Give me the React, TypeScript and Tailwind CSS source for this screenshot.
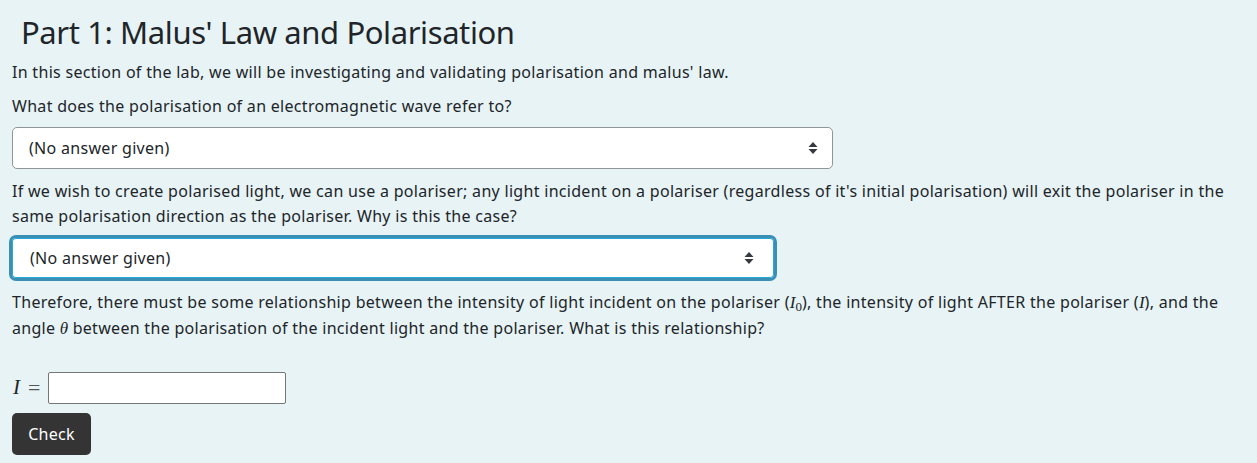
import { useState } from "react"

function Arrows() {
  return (
    <svg width="10" height="14" viewBox="0 0 10 14" className="shrink-0">
      <path d="M5 1 L9.5 6 H0.5 Z" fill="#343a40" />
      <path d="M5 13 L9.5 8 H0.5 Z" fill="#343a40" />
    </svg>
  )
}

function Select({ focused, width }: { focused?: boolean; width: string }) {
  return (
    <div
      className={
        focused
          ? `flex h-[46px] ${width} items-center justify-between rounded-[7px] border-[3px] border-[#3a8fb5] bg-white pr-[20px] pl-[18px] ring-1 ring-inset ring-[#2aa7d8]`
          : `flex h-[42px] ${width} items-center justify-between rounded-[5px] border border-[#8f959b] bg-white pr-[14px] pl-[16px]`
      }
    >
      <span className="text-[16px] tracking-[0.3px] text-[#212529]">(No answer given)</span>
      <Arrows />
    </div>
  )
}

const serif = { fontFamily: "'Liberation Serif', 'Times New Roman', serif" }

export default function App() {
  const [value, setValue] = useState("")
  return (
    <div
      className="min-h-[463px] w-full bg-[#e7f3f5] text-[#212529]"
      style={{ fontFamily: "'Noto Sans', 'Open Sans', sans-serif" }}
    >
      <div className="px-[12px] pt-[12px]">
        <h2 className="pl-[9px] text-[31px] leading-[40px] font-normal tracking-[-0.4px] text-[#212529]">
          Part 1: Malus' Law and Polarisation
        </h2>

        <p className="mt-[8px] text-[16px] leading-[25px] tracking-[0.3px]">
          In this section of the lab, we will be investigating and validating polarisation and malus' law.
        </p>
        <p className="mt-[9px] text-[16px] leading-[25px] tracking-[0.3px]">
          What does the polarisation of an electromagnetic wave refer to?
        </p>

        <div className="mt-[8px]">
          <Select width="w-[821px]" />
        </div>

        <p className="mt-[10px] text-[16px] leading-[25px] tracking-[0.3px]">
          If we wish to create polarised light, we can use a polariser; any light incident on a polariser (regardless
          of it's initial polarisation) will exit the polariser in the same polarisation direction as the polariser.
          Why is this the case?
        </p>

        <div className="mt-[6px] -ml-[3px]">
          <Select focused width="w-[768px]" />
        </div>

        <p className="mt-[8px] text-[16px] leading-[26px] tracking-[0.3px]">
          Therefore, there must be some relationship between the intensity of light incident on the polariser (
          <span className="text-[17px] leading-none italic tracking-normal" style={serif}>
            I<span className="relative top-[3px] text-[13px] not-italic leading-none">0</span>
          </span>
          ), the intensity of light AFTER the polariser (
          <span className="text-[17px] leading-none italic tracking-normal" style={serif}>
            I
          </span>
          ), and the angle{" "}
          <span className="text-[17px] leading-none italic tracking-normal" style={serif}>
            θ
          </span>{" "}
          between the polarisation of the incident light and the polariser. What is this relationship?
        </p>

        <div className="mt-[30px] flex items-center">
          <span className="pl-[1px] text-[21px] italic" style={serif}>
            I
          </span>
          <span className="ml-[8px] text-[22px] text-[#555]" style={serif}>
            =
          </span>
          <input
            value={value}
            onChange={(e) => setValue(e.target.value)}
            className="ml-[8px] h-[32px] w-[238px] rounded-[2px] border border-[#767676] bg-white px-1 outline-none"
          />
        </div>

        <button className="mt-[9px] h-[42px] w-[79px] rounded-[5px] bg-[#343434] text-[16px] tracking-[0.3px] text-white">
          Check
        </button>
      </div>
    </div>
  )
}
